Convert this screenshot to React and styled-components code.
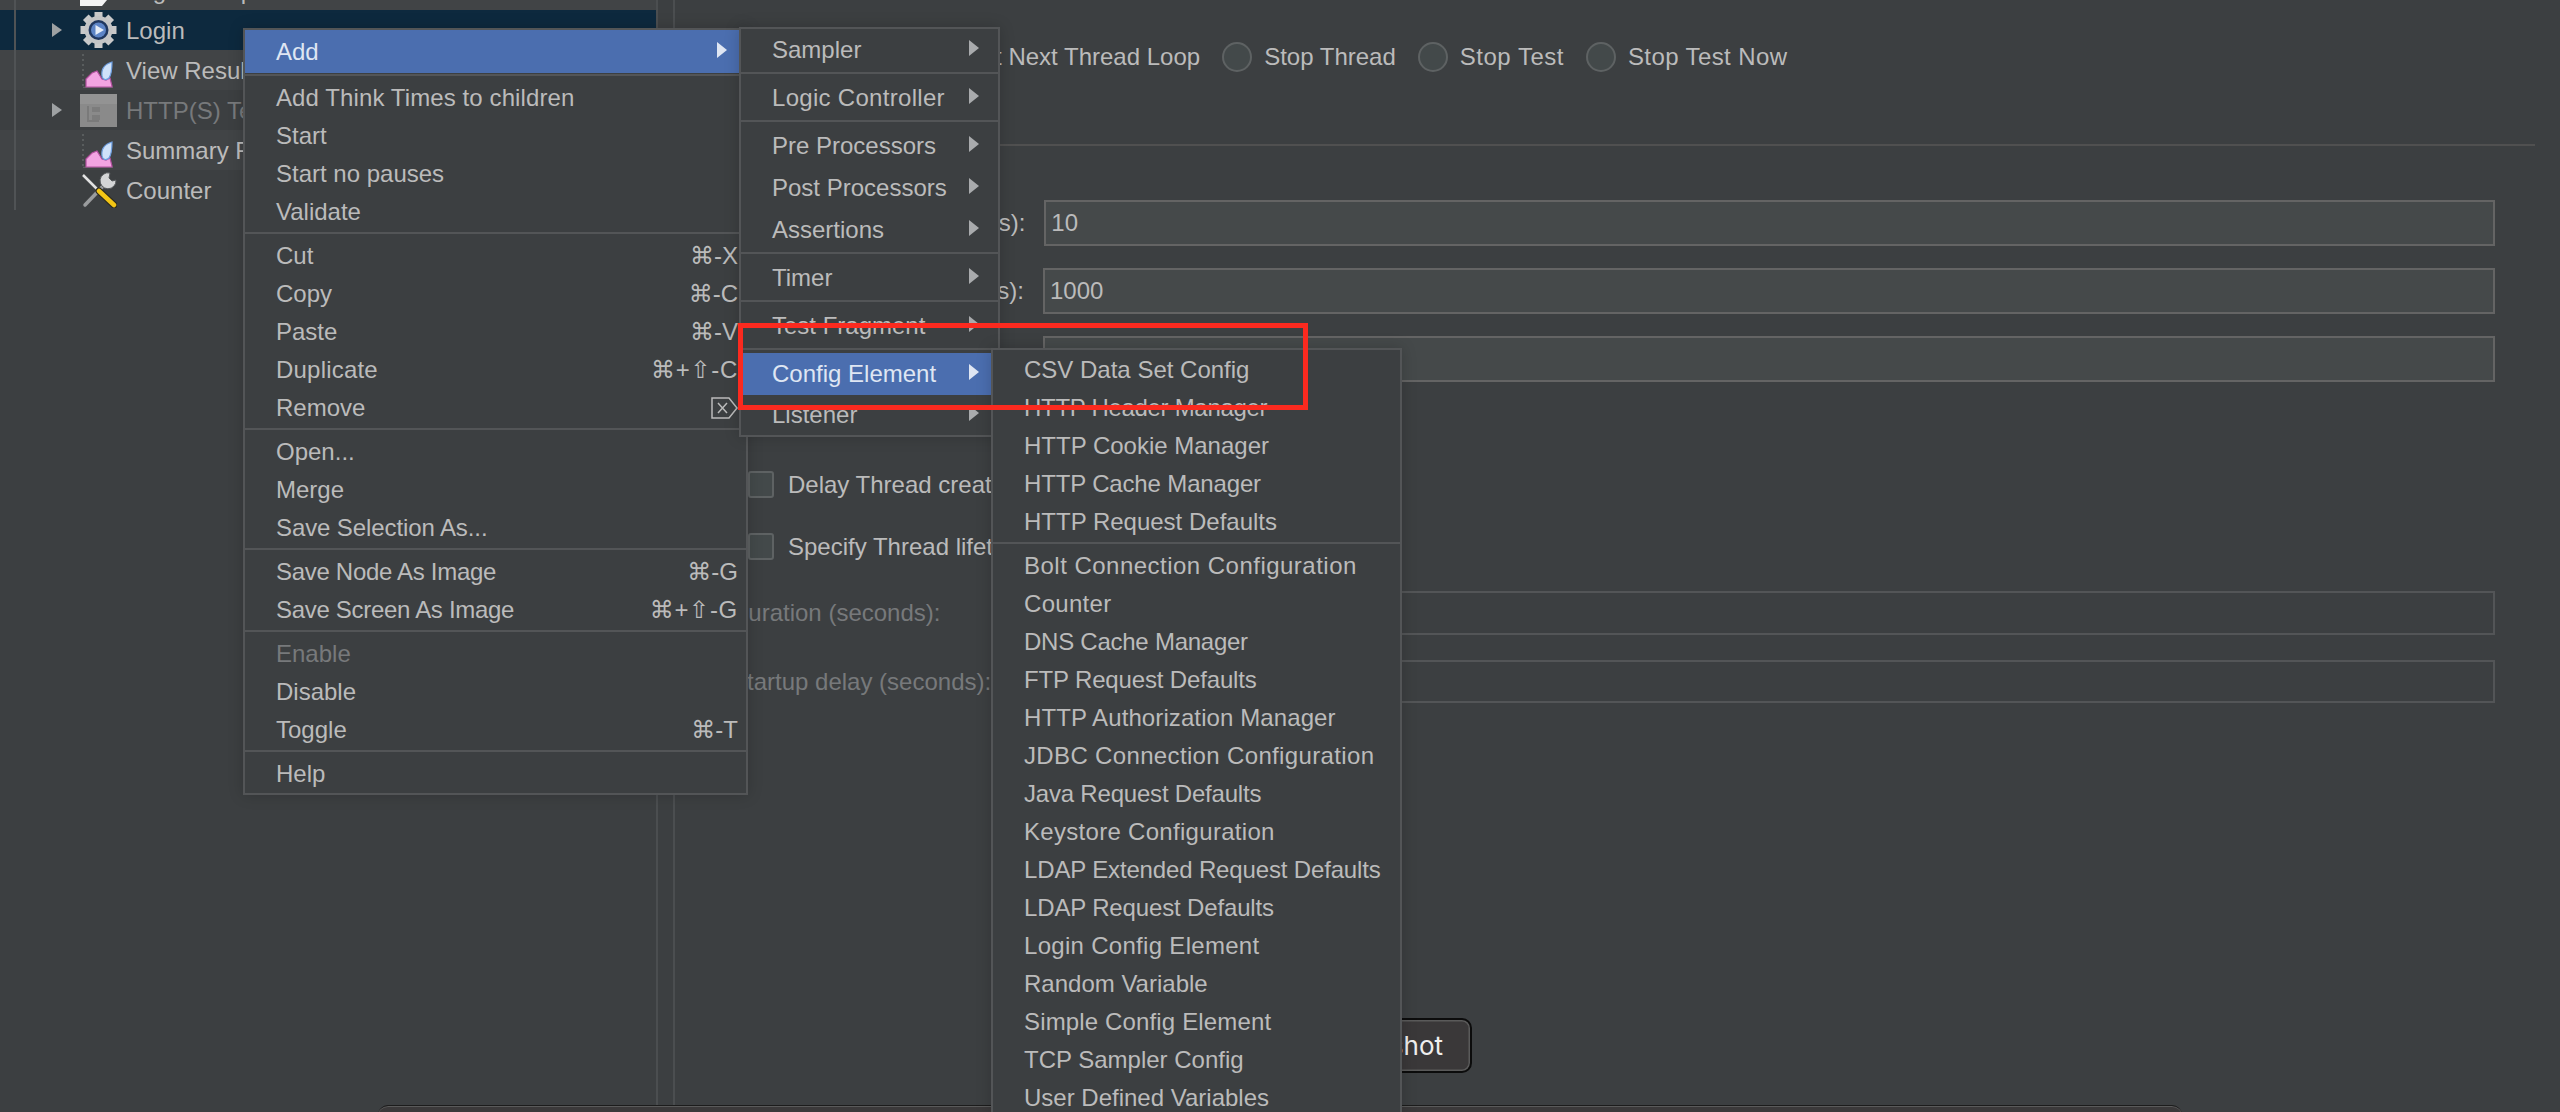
import React from 'react';
import styled, { createGlobalStyle } from 'styled-components';

const GlobalStyle = createGlobalStyle`
  html, body {
    margin: 0;
    padding: 0;
    background: #3c3f41;
  }
  * {
    box-sizing: border-box;
  }
`;

const SANS = `"Liberation Sans", "DejaVu Sans", sans-serif`;

const Screen = styled.div`
  position: relative;
  display: flex;
  width: 2560px;
  height: 1112px;
  overflow: hidden;
  background: #3c3f41;
  color: #bbbbbb;
  font: 24px/1 ${SANS};
`;

/* ---- tree on the left ---- */

const TreePane = styled.div`
  position: relative;
  flex: 0 0 658px;
  height: 1105px;
  border-right: 2px solid #4b4e50;

  &::before {
    content: '';
    position: absolute;
    left: 14px;
    top: 0;
    width: 2px;
    height: 210px;
    background: #505355;
  }
`;

const Tree = styled.div`
  display: flex;
  flex-direction: column;
  margin-top: -30px;
`;

const TreeRow = styled.div`
  display: flex;
  align-items: center;
  height: 40px;
  padding-left: 52px;
  white-space: nowrap;
  background: ${(p) => (p.$selected ? '#0d293e' : p.$stripe ? '#414446' : 'transparent')};
  color: ${(p) => (p.$disabled ? '#77797b' : '#bbbbbb')};
`;

const TreeLabel = styled.span`
  padding-top: 2px;
`;

const Expander = styled.span`
  flex: 0 0 28px;
  width: 0;
  height: 0;

  &::before {
    content: '';
    display: ${(p) => (p.$open ? 'block' : 'none')};
    width: 0;
    height: 0;
    margin-top: -7px;
    border-left: 10px solid #9ea1a3;
    border-top: 7px solid transparent;
    border-bottom: 7px solid transparent;
  }
`;

const TreeIcon = styled.svg`
  flex: 0 0 37px;
  width: 37px;
  height: 36px;
  margin-right: 9px;
`;

const PageIcon = () => (
  <TreeIcon viewBox="0 0 37 36">
    <polygon points="0,0 27,0 27,28 22,34 0,34" fill="#f4f4f4" />
  </TreeIcon>
);

const GearIcon = () => (
  <TreeIcon viewBox="0 0 37 36">
    {[0, 45, 90, 135, 180, 225, 270, 315].map((deg) => (
      <rect key={deg} x="14.5" y="0" width="8" height="8" fill="#c9c9c9" transform={`rotate(${deg} 18.5 18)`} />
    ))}
    <circle cx="18.5" cy="18" r="14" fill="#c4c5c6" />
    <circle cx="18.5" cy="18" r="10" fill="#20375f" />
    <circle cx="18.5" cy="18" r="7.5" fill="#5d84c6" />
    <polygon points="15.5,13 24,18 15.5,23" fill="#e6edf8" />
  </TreeIcon>
);

const ChartIcon = () => (
  <TreeIcon viewBox="0 0 37 36">
    <line x1="3" y1="2" x2="3" y2="35" stroke="#626567" strokeWidth="1.5" strokeDasharray="2 3" />
    <line x1="3" y1="35.5" x2="33" y2="35.5" stroke="#5c5f61" strokeWidth="1.5" />
    <polygon points="6,35 6,27 12,21 17,19 22,27 26,28 30,26 32,34 32,35" fill="#f3a4e2" stroke="#b3509f" strokeWidth="1.2" />
    <path d="M32 10 C25 12 21 17 22 24 C23 29 27 28 29 26 C31 23 32 18 32 10 Z" fill="#cfe2fa" stroke="#6f9fe0" strokeWidth="1.2" />
  </TreeIcon>
);

const RecorderIcon = () => (
  <TreeIcon viewBox="0 0 37 36">
    <rect x="0" y="2" width="37" height="33" fill="#8a8a8a" />
    <rect x="0" y="2" width="37" height="10" fill="#939393" />
    <rect x="7" y="14" width="2" height="14" fill="#7a7a7a" />
    <rect x="12" y="15" width="8" height="5" fill="#7c7c7c" />
    <rect x="12" y="23" width="8" height="5" fill="#7c7c7c" />
    <rect x="7" y="28" width="12" height="2" fill="#7a7a7a" />
  </TreeIcon>
);

const ToolsIcon = () => (
  <TreeIcon viewBox="0 0 37 36">
    <line x1="5" y1="33" x2="26" y2="11" stroke="#3f4143" strokeWidth="6" strokeLinecap="round" />
    <line x1="5" y1="33" x2="26" y2="11" stroke="#9a9c9e" strokeWidth="3.5" strokeLinecap="round" />
    <path d="M36 8 A8 8 0 1 1 30 1 L29 6 L32 9 Z" fill="#d4d5d6" stroke="#55585a" strokeWidth="1" />
    <line x1="3" y1="3" x2="20" y2="20" stroke="#e2e2e2" strokeWidth="2.5" />
    <line x1="19" y1="19" x2="34" y2="33" stroke="#2c2a20" strokeWidth="7" strokeLinecap="round" />
    <line x1="19" y1="19" x2="34" y2="33" stroke="#f3c515" strokeWidth="4.5" strokeLinecap="round" />
  </TreeIcon>
);

const treeItems = [
  { label: 'Login Sampler', icon: PageIcon, stripe: true },
  { label: 'Login', icon: GearIcon, open: true, selected: true },
  { label: 'View Results Tree', icon: ChartIcon, stripe: true },
  { label: 'HTTP(S) Test Script Recorder', icon: RecorderIcon, open: true, disabled: true },
  { label: 'Summary Report', icon: ChartIcon, stripe: true },
  { label: 'Counter', icon: ToolsIcon },
];

/* ---- thread group form on the right ---- */

const FormPane = styled.div`
  display: flex;
  flex: 1;
  flex-direction: column;
  height: 1105px;
  margin-left: 15px;
  padding: 42px 65px 0 56px;
  border-left: 2px solid #4b4e50;
`;

const RadioRow = styled.div`
  display: flex;
  gap: 22px;
  height: 30px;
  margin-left: 18px;
  white-space: nowrap;
`;

const RadioOption = styled.label`
  display: flex;
  align-items: center;
  gap: 12px;
  letter-spacing: ${(p) => p.$spread || 0}px;
`;

const RadioDot = styled.span`
  width: 30px;
  height: 30px;
  border: 2px solid #5e6263;
  border-radius: 50%;
  background: #43494a;
`;

const Rule = styled.div`
  height: 2px;
  margin: 72px -40px 54px 0;
  background: #505050;
`;

const FieldRow = styled.div`
  display: flex;
  align-items: center;
  height: ${(p) => p.$height || 46}px;
  margin-top: ${(p) => p.$gap || 0}px;
`;

const FieldLabel = styled.span`
  flex: 0 0 312px;
  padding-right: 19px;
  white-space: nowrap;
  text-align: ${(p) => (p.$muted ? 'left' : 'right')};
  color: ${(p) => (p.$muted ? '#77797b' : '#bbbbbb')};
`;

const TextField = styled.div`
  flex: 1;
  height: 100%;
  padding-left: 5px;
  line-height: 42px;
  border: 2px solid ${(p) => (p.$muted ? '#535557' : '#646464')};
  background: ${(p) => (p.$muted ? 'transparent' : '#45494a')};
`;

const CheckRow = styled.label`
  display: flex;
  align-items: center;
  gap: 14px;
  height: 27px;
  margin: ${(p) => p.$gap}px 0 0 17px;
  white-space: nowrap;
`;

const CheckBox = styled.span`
  width: 26px;
  height: 27px;
  border: 2px solid #5e6263;
  border-radius: 3px;
  background: #43494a;
`;

const SnapshotButton = styled.button`
  width: 178px;
  height: 55px;
  margin: 315px 0 0 563px;
  padding: 0 27px 0 0;
  text-align: right;
  color: #eeeeee;
  font: 26px Inter, sans-serif;
  background: #3a3839;
  border: 2px solid #0c0c0c;
  border-radius: 10px;
  box-shadow: inset 0 0 0 1.5px #5a5a5a;
`;

/* ---- bottom edge of the window behind ---- */

const BackWindow = styled.div`
  position: absolute;
  left: 378px;
  right: 378px;
  top: 1105px;
  height: 20px;
  background: #3b393a;
  border-top: 1px solid #1c1c1c;
  border-radius: 10px 10px 0 0;
  box-shadow: inset 0 1px 0 #5a5a5a;
`;

/* ---- popup menus ---- */

const Menu = styled.div`
  position: absolute;
  left: ${(p) => p.$left}px;
  top: ${(p) => p.$top}px;
  width: ${(p) => p.$width}px;
  padding: ${(p) => p.$pad || 0}px 0 0;
  background: #3c3f41;
  border: 2px solid #535557;
  box-shadow: 0 0 14px rgba(0, 0, 0, 0.18);
  z-index: ${(p) => p.$layer};
`;

const MenuRow = styled.div`
  display: flex;
  align-items: center;
  justify-content: space-between;
  height: ${(p) => p.$height || 38}px;
  padding: 0 8px 0 31px;
  white-space: nowrap;
  background: ${(p) => (p.$active ? '#4b6eaf' : 'transparent')};
  color: ${(p) => (p.$active ? '#dfe6f3' : p.$disabled ? '#77797b' : '#bbbbbb')};
  letter-spacing: ${(p) => p.$spread || 0}px;
`;

const MenuArrow = styled.span`
  width: 0;
  height: 0;
  margin: -4px 11px 0 0;
  border-left: 10px solid ${(p) => (p.$active ? '#dfe6f3' : '#a9abad')};
  border-top: 8px solid transparent;
  border-bottom: 8px solid transparent;
`;

const Separator = styled.div`
  height: 2px;
  margin: 1px 0 3px;
  background: #535557;
`;

const Shortcut = styled.span`
  font-family: "Liberation Sans", "DejaVu Sans", sans-serif;
  letter-spacing: ${(p) => p.$spread || 0}px;
`;

const DeleteKey = styled.svg`
  width: 27px;
  height: 22px;
  fill: none;
  stroke: #bbbbbb;
  stroke-width: 1.5;
`;

const Highlight = styled.div`
  position: absolute;
  left: 738px;
  top: 323px;
  width: 570px;
  height: 87px;
  border: 5px solid #fb2a1f;
  z-index: 5;
`;

const SEP = 'separator';

const radioOptions = [
  { name: 'Continue' },
  { name: 'Start Next Thread Loop' },
  { name: 'Stop Thread' },
  { name: 'Stop Test', spread: 0.5 },
  { name: 'Stop Test Now', spread: 0.4 },
];

const contextItems = [
  { label: 'Add', sub: true, active: true, height: 43 },
  SEP,
  { label: 'Add Think Times to children', spread: 0.1 },
  { label: 'Start' },
  { label: 'Start no pauses' },
  { label: 'Validate' },
  SEP,
  { label: 'Cut', keys: '⌘-X' },
  { label: 'Copy', keys: '⌘-C' },
  { label: 'Paste', keys: '⌘-V' },
  { label: 'Duplicate', keys: '⌘+⇧-C', keySpread: 0.7, spread: 0.2 },
  { label: 'Remove', del: true },
  SEP,
  { label: 'Open...' },
  { label: 'Merge' },
  { label: 'Save Selection As...', spread: -0.1 },
  SEP,
  { label: 'Save Node As Image', keys: '⌘-G', spread: -0.3 },
  { label: 'Save Screen As Image', keys: '⌘+⇧-G', keySpread: 0.7, spread: -0.3 },
  SEP,
  { label: 'Enable', disabled: true },
  { label: 'Disable' },
  { label: 'Toggle', keys: '⌘-T' },
  SEP,
  { label: 'Help' },
];

const addItems = [
  { label: 'Sampler', sub: true },
  SEP,
  { label: 'Logic Controller', sub: true, spread: 0.3 },
  SEP,
  { label: 'Pre Processors', sub: true },
  { label: 'Post Processors', sub: true },
  { label: 'Assertions', sub: true },
  SEP,
  { label: 'Timer', sub: true },
  SEP,
  { label: 'Test Fragment', sub: true },
  SEP,
  { label: 'Config Element', sub: true, active: true },
  { label: 'Listener', sub: true, height: 40 },
];

const configItems = [
  { label: 'CSV Data Set Config' },
  { label: 'HTTP Header Manager', spread: -0.3 },
  { label: 'HTTP Cookie Manager' },
  { label: 'HTTP Cache Manager', spread: -0.15 },
  { label: 'HTTP Request Defaults' },
  SEP,
  { label: 'Bolt Connection Configuration', spread: 0.48 },
  { label: 'Counter', spread: 0.3 },
  { label: 'DNS Cache Manager', spread: -0.25 },
  { label: 'FTP Request Defaults', spread: -0.15 },
  { label: 'HTTP Authorization Manager', spread: 0.1 },
  { label: 'JDBC Connection Configuration', spread: 0.35 },
  { label: 'Java Request Defaults', spread: -0.2 },
  { label: 'Keystore Configuration', spread: 0.3 },
  { label: 'LDAP Extended Request Defaults', spread: -0.15 },
  { label: 'LDAP Request Defaults', spread: -0.15 },
  { label: 'Login Config Element', spread: 0.3 },
  { label: 'Random Variable' },
  { label: 'Simple Config Element', spread: 0.15 },
  { label: 'TCP Sampler Config' },
  { label: 'User Defined Variables' },
];

const PopupMenu = ({ items, left, top, width, layer, pad, rowHeight }) => (
  <Menu $left={left} $top={top} $width={width} $layer={layer} $pad={pad}>
    {items.map((item, i) =>
      item === SEP ? (
        <Separator key={i} />
      ) : (
        <MenuRow
          key={item.label}
          $active={item.active}
          $disabled={item.disabled}
          $height={item.height || rowHeight}
          $spread={item.spread}
        >
          <span>{item.label}</span>
          {item.sub && <MenuArrow $active={item.active} />}
          {item.keys && <Shortcut $spread={item.keySpread}>{item.keys}</Shortcut>}
          {item.del && (
            <DeleteKey viewBox="0 0 27 22">
              <path d="M1 1 H18 L26 11 L18 21 H1 Z" />
              <path d="M7 6 L16 16 M16 6 L7 16" />
            </DeleteKey>
          )}
        </MenuRow>
      )
    )}
  </Menu>
);

export default function App() {
  return (
    <Screen>
      <GlobalStyle />
      <TreePane>
        <Tree>
          {treeItems.map((item) => (
            <TreeRow key={item.label} $selected={item.selected} $stripe={item.stripe} $disabled={item.disabled}>
              <Expander $open={item.open} />
              <item.icon />
              <TreeLabel>{item.label}</TreeLabel>
            </TreeRow>
          ))}
        </Tree>
      </TreePane>

      <FormPane>
        <RadioRow>
          {radioOptions.map((option) => (
            <RadioOption key={option.name} $spread={option.spread}>
              <RadioDot />
              {option.name}
            </RadioOption>
          ))}
        </RadioRow>
        <Rule />
        <FieldRow>
          <FieldLabel>Number of Threads (users):</FieldLabel>
          <TextField>10</TextField>
        </FieldRow>
        <FieldRow $gap={22}>
          <FieldLabel>Ramp-up period (seconds):</FieldLabel>
          <TextField>1000</TextField>
        </FieldRow>
        <FieldRow $gap={22}>
          <FieldLabel>Loop Count:</FieldLabel>
          <TextField />
        </FieldRow>
        <CheckRow $gap={89}>
          <CheckBox />
          Delay Thread creation until needed
        </CheckRow>
        <CheckRow $gap={35}>
          <CheckBox />
          Specify Thread lifetime
        </CheckRow>
        <FieldRow $gap={31} $height={44}>
          <FieldLabel $muted>Duration (seconds):</FieldLabel>
          <TextField $muted />
        </FieldRow>
        <FieldRow $gap={25} $height={43}>
          <FieldLabel $muted>Startup delay (seconds):</FieldLabel>
          <TextField $muted />
        </FieldRow>
        <SnapshotButton>Snapshot</SnapshotButton>
      </FormPane>

      <BackWindow />

      <PopupMenu items={contextItems} left={243} top={28} width={505} layer={1} />
      <PopupMenu items={addItems} left={739} top={27} width={261} layer={2} rowHeight={42} />
      <PopupMenu items={configItems} left={991} top={348} width={411} layer={3} pad={1} />
      <Highlight />
    </Screen>
  );
}
